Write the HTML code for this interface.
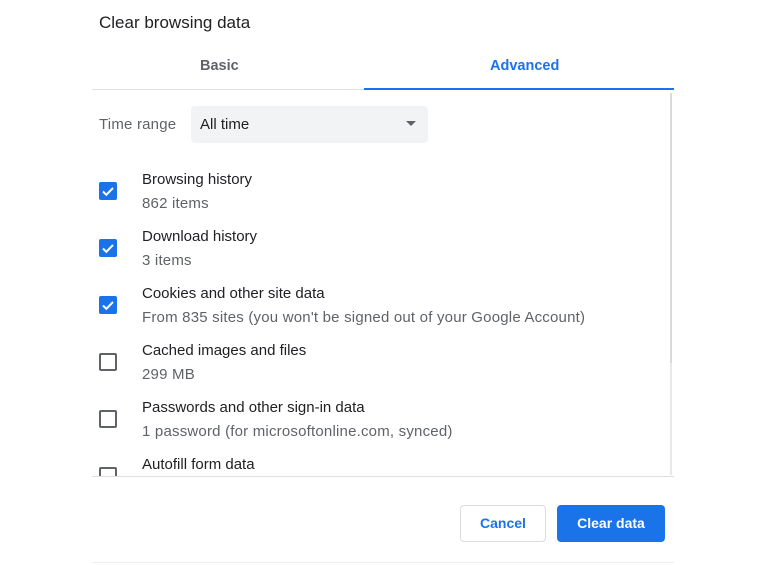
<!DOCTYPE html><html><head><style>
body{margin:0;width:768px;height:565px;background:#fff;font-family:"Liberation Sans",sans-serif;position:relative;overflow:hidden;color:#202124}
.a{position:absolute}
.t{font-size:15px;color:#202124}
.s{font-size:15px;color:#5f6368;letter-spacing:0.2px}
.cb{position:absolute;left:99px;width:18px;height:18px;border-radius:2px;box-sizing:border-box}
.on{background:#1a73e8}
.off{border:2px solid #5f6368}
</style></head><body>
<div class="a" style="left:99px;top:13px;font-size:17px">Clear browsing data</div>
<div class="a" style="left:200px;top:58px;font-size:14.5px;color:#5f6368;font-weight:bold">Basic</div>
<div class="a" style="left:490px;top:58px;font-size:14.5px;color:#1a73e8;font-weight:bold">Advanced</div>
<div class="a" style="left:92px;top:89px;width:272px;height:1px;background:#e0e0e0"></div>
<div class="a" style="left:364px;top:88px;width:310px;height:2px;background:#1a73e8"></div>
<div class="a" style="left:670px;top:93px;width:2px;height:382px;background:#e8e8e8"></div>
<div class="a" style="left:670px;top:93px;width:2px;height:270px;background:#dadada"></div>
<div class="a s" style="left:99px;top:116px;font-size:15px">Time range</div>
<div class="a" style="left:191px;top:106px;width:237px;height:37px;background:#f1f3f4;border-radius:4px"></div>
<div class="a t" style="left:200px;top:116px">All time</div>
<div class="a" style="left:406px;top:121px;width:0;height:0;border-left:5px solid transparent;border-right:5px solid transparent;border-top:5px solid #5f6368"></div>
<div style="position:absolute;left:0;top:0;width:768px;height:476px;overflow:hidden">
<div class="cb on" style="top:182px"><svg width="18" height="18"><path d="M4 9.5l3.3 3.3L14 6" stroke="#fff" stroke-width="2" fill="none"/></svg></div>
<div class="a t" style="left:142px;top:171px">Browsing history</div><div class="a s" style="left:142px;top:195px">862 items</div>
<div class="cb on" style="top:239px"><svg width="18" height="18"><path d="M4 9.5l3.3 3.3L14 6" stroke="#fff" stroke-width="2" fill="none"/></svg></div>
<div class="a t" style="left:142px;top:228px">Download history</div><div class="a s" style="left:142px;top:252px">3 items</div>
<div class="cb on" style="top:296px"><svg width="18" height="18"><path d="M4 9.5l3.3 3.3L14 6" stroke="#fff" stroke-width="2" fill="none"/></svg></div>
<div class="a t" style="left:142px;top:285px">Cookies and other site data</div><div class="a s" style="left:142px;top:309px">From 835 sites (you won't be signed out of your Google Account)</div>
<div class="cb off" style="top:353px"></div>
<div class="a t" style="left:142px;top:342px">Cached images and files</div><div class="a s" style="left:142px;top:366px">299 MB</div>
<div class="cb off" style="top:410px"></div>
<div class="a t" style="left:142px;top:399px">Passwords and other sign-in data</div><div class="a s" style="left:142px;top:423px">1 password (for microsoftonline.com, synced)</div>
<div class="cb off" style="top:467px"></div>
<div class="a t" style="left:142px;top:456px">Autofill form data</div>
</div>
<div class="a" style="left:92px;top:476px;width:582px;height:1px;background:#e0e0e0"></div>
<div class="a" style="left:460px;top:505px;width:86px;height:37px;box-sizing:border-box;border:1px solid #dadce0;border-radius:4px;color:#1a73e8;font-weight:bold;font-size:14px;text-align:center;line-height:35px">Cancel</div>
<div class="a" style="left:557px;top:505px;width:108px;height:37px;background:#1a73e8;border-radius:4px;color:#fff;font-weight:bold;font-size:14px;text-align:center;line-height:37px">Clear data</div>
<div class="a" style="left:92px;top:562px;width:582px;height:1px;background:#eee"></div>
</body></html>
